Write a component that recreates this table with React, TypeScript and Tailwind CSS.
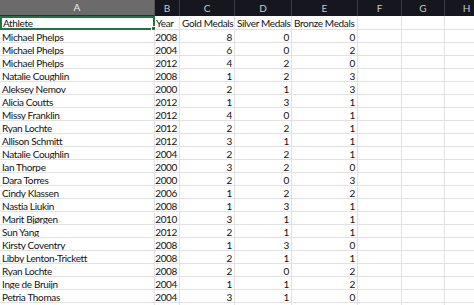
const cols = ["A", "B", "C", "D", "E", "F", "G", "H"];

const rows: [string, string, string, string, string][] = [
  ["Michael Phelps", "2008", "8", "0", "0"],
  ["Michael Phelps", "2004", "6", "0", "2"],
  ["Michael Phelps", "2012", "4", "2", "0"],
  ["Natalie Coughlin", "2008", "1", "2", "3"],
  ["Aleksey Nemov", "2000", "2", "1", "3"],
  ["Alicia Coutts", "2012", "1", "3", "1"],
  ["Missy Franklin", "2012", "4", "0", "1"],
  ["Ryan Lochte", "2012", "2", "2", "1"],
  ["Allison Schmitt", "2012", "3", "1", "1"],
  ["Natalie Coughlin", "2004", "2", "2", "1"],
  ["Ian Thorpe", "2000", "3", "2", "0"],
  ["Dara Torres", "2000", "2", "0", "3"],
  ["Cindy Klassen", "2006", "1", "2", "2"],
  ["Nastia Liukin", "2008", "1", "3", "1"],
  ["Marit Bjørgen", "2010", "3", "1", "1"],
  ["Sun Yang", "2012", "2", "1", "1"],
  ["Kirsty Coventry", "2008", "1", "3", "0"],
  ["Libby Lenton-Trickett", "2008", "2", "1", "1"],
  ["Ryan Lochte", "2008", "2", "0", "2"],
  ["Inge de Bruijn", "2004", "1", "1", "2"],
  ["Petria Thomas", "2004", "3", "1", "0"],
];

const grid = "grid grid-cols-[155px_25px_55px_57px_66px_44px_43px_44px]";
const cell = "h-[13px] border-r border-b border-[#e2e2e2] overflow-hidden whitespace-nowrap leading-[14px]";

export default function App() {
  return (
    <div className="w-[474px] h-[305px] overflow-hidden bg-white text-[10px] tracking-[-0.35px] text-[#111] [font-family:Lato,'Liberation_Sans',sans-serif]">
      <div className={`${grid} h-[16px] bg-[#16161e] text-[#c9c9c9] tracking-normal`}>
        {cols.map((c, i) => (
          <div
            key={c}
            className={
              i === 0
                ? "flex items-center justify-center bg-[#6b6b6b] text-[#eeeeee] border-r border-[#555] border-b-2 border-b-[#2e2e2e]"
                : "flex items-center justify-center border-r border-[#3a3a44]"
            }
          >
            {c}
          </div>
        ))}
      </div>
      <div className={grid}>
        <div className="relative h-[14px] border-2 border-[#217346] pl-[1px] leading-[11px] whitespace-nowrap">
          Athlete
          <span className="absolute -right-[3px] -bottom-[3px] w-[5px] h-[5px] bg-[#217346] border border-white" />
        </div>
        <div className={`${cell} h-[14px] pl-[1px] leading-[15px]`}>Year</div>
        <div className={`${cell} h-[14px] pl-[2px] leading-[15px]`}>Gold Medals</div>
        <div className={`${cell} h-[14px] pl-[2px] leading-[15px]`}>Silver Medals</div>
        <div className={`${cell} h-[14px] pl-[2px] leading-[15px]`}>Bronze Medals</div>
        <div className={`${cell} h-[14px]`} />
        <div className={`${cell} h-[14px]`} />
        <div className={`${cell} h-[14px]`} />
        {rows.map((r, ri) => (
          <div key={ri} className="contents">
            <div className={`${cell} pl-[2px]`}>{r[0]}</div>
            <div className={`${cell} text-right pr-[2px]`}>{r[1]}</div>
            <div className={`${cell} text-right pr-[2px]`}>{r[2]}</div>
            <div className={`${cell} text-right pr-[2px]`}>{r[3]}</div>
            <div className={`${cell} text-right pr-[2px]`}>{r[4]}</div>
            <div className={cell} />
            <div className={cell} />
            <div className={cell} />
          </div>
        ))}
        {cols.map((c) => (
          <div key={c} className={cell} />
        ))}
      </div>
    </div>
  );
}
